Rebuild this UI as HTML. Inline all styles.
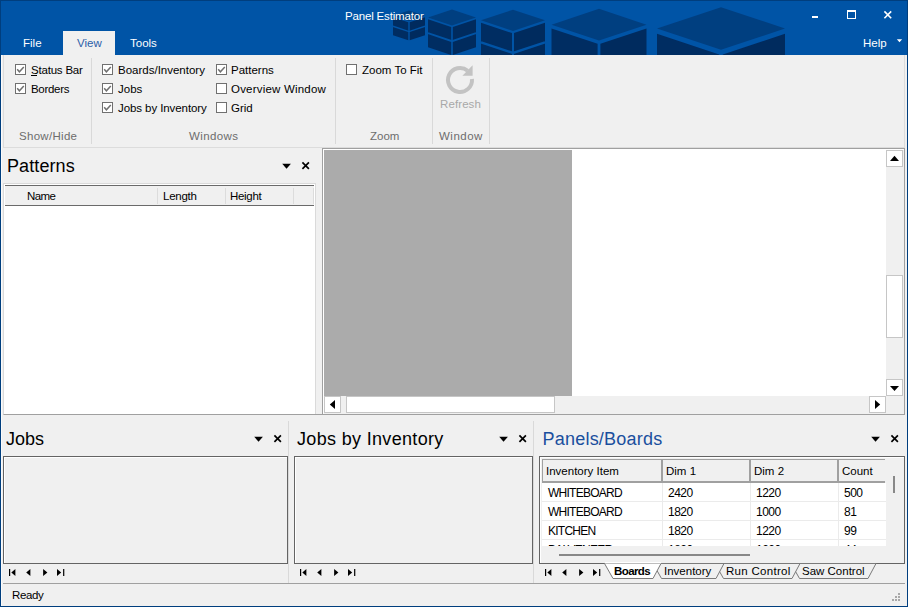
<!DOCTYPE html>
<html><head><meta charset="utf-8">
<style>
*{margin:0;padding:0;box-sizing:border-box}
html,body{width:908px;height:607px;overflow:hidden;background:#f0f0f0}
body{position:relative;font-family:"Liberation Sans",sans-serif;color:#000}
.a{position:absolute}
.t{position:absolute;white-space:pre;font-size:11.5px;line-height:20px;color:#000}
.h{position:absolute;white-space:pre;font-size:18px;line-height:20px;color:#000}
.cb{position:absolute;width:11px;height:11px;border:1px solid #707070;background:#fff}
.cb svg{position:absolute;left:0;top:0}
.g .t{font-size:12px;letter-spacing:-0.5px}
.g .w{letter-spacing:-0.75px}
.sep{position:absolute;width:1px;background:#d9d9d9}
</style></head><body>

<!-- window border -->
<div class="a" style="left:0;top:0;width:908px;height:607px;border:1px solid #003e7e"></div>
<div class="a" style="left:1px;top:1px;width:906px;height:54px;background:#0054a6"></div>

<!-- title bar graphics -->
<svg class="a" style="left:0;top:0" width="908" height="55" viewBox="0 0 908 55">
    <polygon points="409,10.5 425,15.833333333333332 409,21.166666666666664 393,15.833333333333332" fill="#003f80"/>
    <polygon points="393.00,17.23 408.30,22.33 408.30,40.33 393.00,35.23" fill="#002d62"/>
    <polygon points="409.70,22.33 425.00,17.23 425.00,35.23 409.70,40.33" fill="#002b5e"/>
    <polyline points="393.00,26.23 409.00,31.57 425.00,26.23" fill="none" stroke="#0054a6" stroke-width="1.40"/>
    <polygon points="452,9.4 476,17.4 452,25.4 428,17.4" fill="#003f80"/>
    <polygon points="428.00,19.20 451.20,26.93 451.20,54.93 428.00,47.20" fill="#002d62"/>
    <polygon points="452.80,26.93 476.00,19.20 476.00,47.20 452.80,54.93" fill="#002b5e"/>
    <polyline points="428.00,33.20 452.00,41.20 476.00,33.20" fill="none" stroke="#0054a6" stroke-width="1.80"/>
    <polygon points="513,9.7 545,20.366666666666667 513,31.03333333333333 481,20.366666666666667" fill="#003f80"/>
    <polygon points="481.00,22.77 512.00,33.10 512.00,72.10 481.00,61.77" fill="#002d62"/>
    <polygon points="514.00,33.10 545.00,22.77 545.00,61.77 514.00,72.10" fill="#002b5e"/>
    <polyline points="481.00,42.27 513.00,52.93 545.00,42.27" fill="none" stroke="#0054a6" stroke-width="2.40"/>
    <polygon points="599,8.8 646.5,24.633333333333333 599,40.46666666666667 551.5,24.633333333333333" fill="#003f80"/>
    <polygon points="551.50,28.43 597.60,43.80 597.60,113.80 551.50,98.43" fill="#002d62"/>
    <polygon points="600.40,43.80 646.50,28.43 646.50,98.43 600.40,113.80" fill="#002b5e"/>
    <polygon points="721,7.2 785,28.53333333333333 721,49.86666666666667 657,28.53333333333333" fill="#003f80"/>
    <polygon points="657.00,33.73 719.20,54.47 719.20,144.47 657.00,123.73" fill="#002d62"/>
    <polygon points="722.80,54.47 785.00,33.73 785.00,123.73 722.80,144.47" fill="#002b5e"/>
</svg>
<div class="a" style="left:1px;top:0;width:906px;height:1px;background:#003e7e"></div>

<div class="t" style="left:345px;top:6px;color:#fff;letter-spacing:-0.17px">Panel Estimator</div>

<!-- window buttons -->
<div class="a" style="left:812px;top:16px;width:6px;height:2px;background:#fff"></div>
<div class="a" style="left:847px;top:10px;width:9px;height:9px;border:1px solid #fff;border-top-width:2px"></div>
<svg class="a" style="left:882px;top:9px" width="12" height="12" viewBox="0 0 12 12"><path d="M2.4 2.4L9.2 9.2M9.2 2.4L2.4 9.2" stroke="#fff" stroke-width="1.6"/></svg>

<!-- tabs -->
<div class="t" style="left:23px;top:33px;color:#fff">File</div>
<div class="a" style="left:63px;top:31px;width:52px;height:25px;background:#f0f0f0"></div>
<div class="t" style="left:77px;top:33px;color:#2b5ea8">View</div>
<div class="t" style="left:130px;top:33px;color:#fff">Tools</div>
<div class="t" style="left:863px;top:33px;color:#fff">Help</div>
<svg class="a" style="left:896px;top:39px" width="8" height="5" viewBox="0 0 8 5"><polygon points="0.8,0.3 6.2,0.3 3.5,3.3" fill="#fff"/></svg>

<!-- ribbon body -->
<div class="a" style="left:1px;top:55px;width:906px;height:93px;background:#f0f0f0"></div>
<div class="a" style="left:1px;top:55px;width:1px;height:551px;background:#fbfbfb"></div>
<div class="a" style="left:3px;top:55px;width:902px;height:93px;border:1px solid #dcdcdc;border-top:none"></div>

<!-- Show/Hide group -->
<div class="cb" style="left:15px;top:64px"><svg width="9" height="9"><polyline points="1.2,4.3 3.4,6.8 7.8,2.1" fill="none" stroke="#707070" stroke-width="1.5"/></svg></div>
<div class="t" style="left:31px;top:60px;letter-spacing:-0.2px">Status Bar</div>
<div class="a" style="left:31px;top:75px;width:6px;height:1px;background:#000"></div>
<div class="cb" style="left:15px;top:83px"><svg width="9" height="9"><polyline points="1.2,4.3 3.4,6.8 7.8,2.1" fill="none" stroke="#707070" stroke-width="1.5"/></svg></div>
<div class="t" style="left:31px;top:79px;letter-spacing:-0.3px">Borders</div>
<div class="t" style="left:19px;top:126px;color:#6d6d6d;letter-spacing:0.3px">Show/Hide</div>
<div class="sep" style="left:91px;top:58px;height:86px"></div>

<!-- Windows group -->
<div class="cb" style="left:102px;top:64px"><svg width="9" height="9"><polyline points="1.2,4.3 3.4,6.8 7.8,2.1" fill="none" stroke="#707070" stroke-width="1.5"/></svg></div>
<div class="t" style="left:118px;top:60px">Boards/Inventory</div>
<div class="cb" style="left:102px;top:83px"><svg width="9" height="9"><polyline points="1.2,4.3 3.4,6.8 7.8,2.1" fill="none" stroke="#707070" stroke-width="1.5"/></svg></div>
<div class="t" style="left:118px;top:79px">Jobs</div>
<div class="cb" style="left:102px;top:102px"><svg width="9" height="9"><polyline points="1.2,4.3 3.4,6.8 7.8,2.1" fill="none" stroke="#707070" stroke-width="1.5"/></svg></div>
<div class="t" style="left:118px;top:98px;letter-spacing:-0.08px">Jobs by Inventory</div>
<div class="cb" style="left:216px;top:64px"><svg width="9" height="9"><polyline points="1.2,4.3 3.4,6.8 7.8,2.1" fill="none" stroke="#707070" stroke-width="1.5"/></svg></div>
<div class="t" style="left:231px;top:60px">Patterns</div>
<div class="cb" style="left:216px;top:83px"></div>
<div class="t" style="left:231px;top:79px;letter-spacing:0.2px">Overview Window</div>
<div class="cb" style="left:216px;top:102px"></div>
<div class="t" style="left:231px;top:98px">Grid</div>
<div class="t" style="left:189px;top:126px;color:#6d6d6d;letter-spacing:0.38px">Windows</div>
<div class="sep" style="left:335px;top:58px;height:86px"></div>

<!-- Zoom group -->
<div class="cb" style="left:346px;top:64px"></div>
<div class="t" style="left:362px;top:60px">Zoom To Fit</div>
<div class="t" style="left:370px;top:126px;color:#6d6d6d">Zoom</div>
<div class="sep" style="left:432px;top:58px;height:86px"></div>

<!-- Window group -->
<svg class="a" style="left:440px;top:60px" width="40" height="40" viewBox="440 60 40 40">
  <path d="M471.96 79 A12 12 0 1 1 467.7 70.8" fill="none" stroke="#c3c3c3" stroke-width="4"/>
  <polygon points="472.6,65.3 472.6,75.8 462.4,75.8" fill="#c3c3c3"/>
</svg>
<div class="t" style="left:440px;top:94px;color:#a8a8a8;letter-spacing:0.1px">Refresh</div>
<div class="t" style="left:439px;top:126px;color:#6d6d6d;letter-spacing:0.5px">Window</div>
<div class="sep" style="left:489px;top:58px;height:86px"></div>

<!-- ===== Patterns panel ===== -->
<div class="h" style="left:7px;top:156px;letter-spacing:0.1px">Patterns</div>
<svg class="a" style="left:282px;top:163px" width="10" height="7"><polygon points="0.2,0.8 8.9,0.8 4.55,5.8" fill="#000"/></svg>
<svg class="a" style="left:301px;top:161px" width="10" height="10"><path d="M1.4 1.4L7.9 7.9M7.9 1.4L1.4 7.9" stroke="#000" stroke-width="1.7"/></svg>

<div class="a" style="left:3px;top:183px;width:313px;height:232px;background:#fff;border:1px solid #dadada;border-bottom-color:#a0a0a0"></div>
<div class="a" style="left:5px;top:185px;width:309px;height:21px;background:#f0f0f0;border-top:1px solid #6a6a6a;border-bottom:1px solid #6a6a6a"></div>
<div class="a" style="left:157px;top:188px;width:1px;height:16px;background:#dcdcdc"></div>
<div class="a" style="left:225px;top:188px;width:1px;height:16px;background:#dcdcdc"></div>
<div class="a" style="left:293px;top:188px;width:1px;height:16px;background:#dcdcdc"></div>
<div class="a" style="left:313px;top:188px;width:1px;height:16px;background:#dcdcdc"></div>
<div class="t" style="left:27px;top:186px;letter-spacing:-0.6px">Name</div>
<div class="t" style="left:163px;top:186px;letter-spacing:-0.25px">Length</div>
<div class="t" style="left:230px;top:186px;letter-spacing:-0.3px">Height</div>

<!-- ===== canvas ===== -->
<div class="a" style="left:315px;top:414px;width:8px;height:1px;background:#a0a0a0"></div>
<div class="a" style="left:322px;top:148px;width:583px;height:267px;border:1px solid #a0a0a0;background:#f0f0f0"></div>
<div class="a" style="left:323px;top:149px;width:581px;height:1px;background:#fff"></div>
<div class="a" style="left:323px;top:149px;width:1px;height:265px;background:#fff"></div>
<div class="a" style="left:572px;top:150px;width:314px;height:246px;background:#fff"></div>
<div class="a" style="left:324px;top:150px;width:248px;height:246px;background:#ababab"></div>
<!-- v scrollbar -->
<div class="a" style="left:886px;top:150px;width:18px;height:246px;background:#f0f0f0"></div>
<div class="a" style="left:886px;top:150px;width:17px;height:17px;background:#fff;border:1px solid #c6c6c6"></div>
<svg class="a" style="left:886px;top:150px" width="17" height="17"><polygon points="4,11 13,11 8.5,5.8" fill="#000"/></svg>
<div class="a" style="left:886px;top:275px;width:17px;height:63px;background:#fff;border:1px solid #c6c6c6"></div>
<div class="a" style="left:886px;top:379px;width:17px;height:17px;background:#fff;border:1px solid #c6c6c6"></div>
<svg class="a" style="left:886px;top:379px" width="17" height="17"><polygon points="4,7 13,7 8.5,12" fill="#000"/></svg>
<!-- h scrollbar -->
<div class="a" style="left:324px;top:396px;width:580px;height:18px;background:#f0f0f0"></div>
<div class="a" style="left:324px;top:396px;width:17px;height:17px;background:#fff;border:1px solid #c6c6c6"></div>
<svg class="a" style="left:324px;top:396px" width="17" height="17"><polygon points="11,4 11,13 5.8,8.5" fill="#000"/></svg>
<div class="a" style="left:346px;top:396px;width:209px;height:17px;background:#fff;border:1px solid #c6c6c6"></div>
<div class="a" style="left:869px;top:396px;width:17px;height:17px;background:#fff;border:1px solid #c6c6c6"></div>
<svg class="a" style="left:869px;top:396px" width="17" height="17"><polygon points="6,4 6,13 11.2,8.5" fill="#000"/></svg>

<!-- ===== bottom panels ===== -->
<div class="a" style="left:288px;top:421px;width:1px;height:162px;background:#d9d9d9"></div>
<div class="a" style="left:533px;top:421px;width:1px;height:162px;background:#d9d9d9"></div>

<div class="h" style="left:6px;top:429px">Jobs</div>
<svg class="a" style="left:254px;top:436px" width="10" height="7"><polygon points="0.2,0.8 8.9,0.8 4.55,5.8" fill="#000"/></svg>
<svg class="a" style="left:273px;top:434px" width="10" height="10"><path d="M1.4 1.4L7.9 7.9M7.9 1.4L1.4 7.9" stroke="#000" stroke-width="1.7"/></svg>
<div class="a" style="left:3px;top:456px;width:285px;height:108px;border:1px solid #646464;background:#f0f0f0"></div>
<div class="a" style="left:4px;top:457px;width:283px;height:106px;border-left:1px solid #fff;border-top:1px solid #fff"></div>

<div class="h" style="left:297px;top:429px;letter-spacing:0.33px">Jobs by Inventory</div>
<svg class="a" style="left:499px;top:436px" width="10" height="7"><polygon points="0.2,0.8 8.9,0.8 4.55,5.8" fill="#000"/></svg>
<svg class="a" style="left:518px;top:434px" width="10" height="10"><path d="M1.4 1.4L7.9 7.9M7.9 1.4L1.4 7.9" stroke="#000" stroke-width="1.7"/></svg>
<div class="a" style="left:294px;top:456px;width:239px;height:108px;border:1px solid #646464;background:#f0f0f0"></div>
<div class="a" style="left:295px;top:457px;width:237px;height:106px;border-left:1px solid #fff;border-top:1px solid #fff"></div>

<div class="h" style="left:542.5px;top:429px;color:#1a4f9e;letter-spacing:0.22px">Panels/Boards</div>
<svg class="a" style="left:871px;top:436px" width="10" height="7"><polygon points="0.2,0.8 8.9,0.8 4.55,5.8" fill="#000"/></svg>
<svg class="a" style="left:890px;top:434px" width="10" height="10"><path d="M1.4 1.4L7.9 7.9M7.9 1.4L1.4 7.9" stroke="#000" stroke-width="1.7"/></svg>
<div class="a" style="left:539px;top:456px;width:366px;height:108px;border:1px solid #646464;background:#f0f0f0"></div>


<!-- grid -->
<div class="a" style="left:540px;top:457px;width:364px;height:106px;border-left:1px solid #fff;border-top:1px solid #fff"></div>
<div class="a g" style="left:542px;top:483px;width:344px;height:63px;background:#fff;overflow:hidden">
  <div class="a" style="left:0;top:18px;width:344px;height:1px;background:#ebebeb"></div>
  <div class="a" style="left:0;top:37px;width:344px;height:1px;background:#ebebeb"></div>
  <div class="a" style="left:0;top:56px;width:344px;height:1px;background:#ebebeb"></div>
  <div class="a" style="left:120px;top:0;width:1px;height:63px;background:#ebebeb"></div>
  <div class="a" style="left:208px;top:0;width:1px;height:63px;background:#ebebeb"></div>
  <div class="a" style="left:296px;top:0;width:1px;height:63px;background:#ebebeb"></div>
  <div class="t w" style="left:6px;top:0px">WHITEBOARD</div>
  <div class="t" style="left:126px;top:0px">2420</div>
  <div class="t" style="left:214px;top:0px">1220</div>
  <div class="t" style="left:302px;top:0px">500</div>
  <div class="t w" style="left:6px;top:19px">WHITEBOARD</div>
  <div class="t" style="left:126px;top:19px">1820</div>
  <div class="t" style="left:214px;top:19px">1000</div>
  <div class="t" style="left:302px;top:19px">81</div>
  <div class="t w" style="left:6px;top:38px">KITCHEN</div>
  <div class="t" style="left:126px;top:38px">1820</div>
  <div class="t" style="left:214px;top:38px">1220</div>
  <div class="t" style="left:302px;top:38px">99</div>
  <div class="t w" style="left:6px;top:57px">BALVENEER</div>
  <div class="t" style="left:126px;top:57px">1820</div>
  <div class="t" style="left:214px;top:57px">1220</div>
  <div class="t" style="left:302px;top:57px">44</div>
</div>
<div class="a" style="left:542px;top:459px;width:343px;height:24px;background:#f0f0f0;border:1px solid #a0a0a0;border-bottom-width:2px;border-right:none"></div>
<div class="a" style="left:661px;top:460px;width:2px;height:22px;background:#a0a0a0"></div>
<div class="a" style="left:749px;top:460px;width:2px;height:22px;background:#a0a0a0"></div>
<div class="a" style="left:837px;top:460px;width:2px;height:22px;background:#a0a0a0"></div>
<div class="t" style="left:546px;top:461px">Inventory Item</div>
<div class="t" style="left:666px;top:461px">Dim 1</div>
<div class="t" style="left:754px;top:461px">Dim 2</div>
<div class="t" style="left:842px;top:461px">Count</div>
<div class="a" style="left:893px;top:476px;width:2px;height:17px;background:#888"></div>
<div class="a" style="left:559px;top:554px;width:191px;height:2px;background:#888"></div>

<!-- tabs -->
<svg class="a" style="left:539px;top:562px" width="366" height="20" viewBox="539 562 366 20">
  <polygon points="791,563.5 799.5,578.5 868,578.5 876,563.5" fill="#f0f0f0" stroke="#7a7a7a" stroke-width="1"/>
  <polygon points="715,563.5 723.5,578.5 792,578.5 800,563.5" fill="#f0f0f0" stroke="#7a7a7a" stroke-width="1"/>
  <polygon points="653,563.5 661.5,578.5 716,578.5 724,563.5" fill="#f0f0f0" stroke="#7a7a7a" stroke-width="1"/>
  <polygon points="604.5,563.5 613,578.5 653,578.5 661,563.5" fill="#fff" stroke="#7a7a7a" stroke-width="1"/>
  <rect x="605" y="562" width="56" height="1.5" fill="#fff"/>
</svg>
<div class="t" style="left:614px;top:561px;font-weight:bold;letter-spacing:-0.6px">Boards</div>
<div class="t" style="left:664px;top:561px">Inventory</div>
<div class="t" style="left:726px;top:561px;letter-spacing:0.3px">Run Control</div>
<div class="t" style="left:802px;top:561px">Saw Control</div>

<!-- nav icons -->
<svg class="a" style="left:9px;top:568px" width="60" height="9" viewBox="0 0 60 9"><rect x="0" y="1" width="1.2" height="7" fill="#000"/><polygon points="6.4,1 6.4,8 2.3,4.5" fill="#000"/><polygon points="21.4,1 21.4,8 17.2,4.5" fill="#000"/><polygon points="34.1,1 34.1,8 38.4,4.5" fill="#000"/><polygon points="48,1 48,8 52.2,4.5" fill="#000"/><rect x="54.1" y="1" width="1.2" height="7" fill="#000"/></svg><svg class="a" style="left:300px;top:568px" width="60" height="9" viewBox="0 0 60 9"><rect x="0" y="1" width="1.2" height="7" fill="#000"/><polygon points="6.4,1 6.4,8 2.3,4.5" fill="#000"/><polygon points="21.4,1 21.4,8 17.2,4.5" fill="#000"/><polygon points="34.1,1 34.1,8 38.4,4.5" fill="#000"/><polygon points="48,1 48,8 52.2,4.5" fill="#000"/><rect x="54.1" y="1" width="1.2" height="7" fill="#000"/></svg><svg class="a" style="left:545px;top:568px" width="60" height="9" viewBox="0 0 60 9"><rect x="0" y="1" width="1.2" height="7" fill="#000"/><polygon points="6.4,1 6.4,8 2.3,4.5" fill="#000"/><polygon points="21.4,1 21.4,8 17.2,4.5" fill="#000"/><polygon points="34.1,1 34.1,8 38.4,4.5" fill="#000"/><polygon points="48,1 48,8 52.2,4.5" fill="#000"/><rect x="54.1" y="1" width="1.2" height="7" fill="#000"/></svg>

<!-- status bar -->
<div class="a" style="left:3px;top:583px;width:902px;height:1px;background:#a0a0a0"></div>
<div class="t" style="left:12px;top:585px;letter-spacing:-0.4px">Ready</div>

<svg class="a" style="left:890px;top:591px" width="12" height="12"><g fill="#a8a8a8">
<rect x="8" y="2" width="2" height="2"/><rect x="5" y="5" width="2" height="2"/><rect x="8" y="5" width="2" height="2"/>
<rect x="2" y="8" width="2" height="2"/><rect x="5" y="8" width="2" height="2"/><rect x="8" y="8" width="2" height="2"/></g></svg>
<!-- window bottom border -->
<div class="a" style="left:0;top:606px;width:908px;height:1px;background:#003e7e"></div>
<div class="a" style="left:907px;top:0;width:1px;height:607px;background:#003e7e"></div>
<div class="a" style="left:0;top:0;width:1px;height:607px;background:#003e7e"></div>
</body></html>
